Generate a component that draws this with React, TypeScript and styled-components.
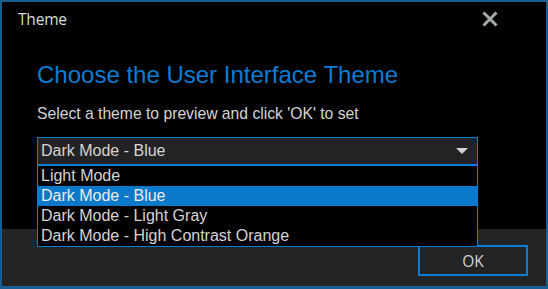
import React, { useState } from "react";
import styled, { createGlobalStyle } from "styled-components";

const GlobalStyle = createGlobalStyle`
  html, body {
    margin: 0;
    padding: 0;
    background: #000;
  }
  * {
    box-sizing: border-box;
  }
`;

const themes = [
  "Light Mode",
  "Dark Mode - Blue",
  "Dark Mode - Light Gray",
  "Dark Mode - High Contrast Orange",
];

const App = () => {
  const [selected] = useState(1);

  return (
    <>
      <GlobalStyle />
      <Window>
        <TitleBar>
          <Title>Theme</Title>
          <CloseButton aria-label="Close">
            <svg width="16" height="16" viewBox="0 0 16 16">
              <path d="M1.5 1.5 L14.5 14.5 M14.5 1.5 L1.5 14.5" stroke="#a3abab" strokeWidth="3" />
            </svg>
          </CloseButton>
        </TitleBar>
        <Body>
          <Heading>Choose the User Interface Theme</Heading>
          <Hint>Select a theme to preview and click 'OK' to set</Hint>
          <SelectWrap>
            <SelectBox>
              <span>{themes[selected]}</span>
              <Arrow />
            </SelectBox>
            <OptionList>
              {themes.map((t, i) => (
                <Option key={t} $active={i === selected}>
                  {t}
                </Option>
              ))}
            </OptionList>
          </SelectWrap>
        </Body>
        <Footer>
          <OkButton>OK</OkButton>
        </Footer>
      </Window>
    </>
  );
};

export default App;

const Window = styled.div`
  width: 548px;
  height: 289px;
  display: flex;
  flex-direction: column;
  background: #000;
  border: 2px solid #1a5d92;
  border-bottom-width: 3px;
  font-family: "Liberation Sans", Arial, sans-serif;
`;

const TitleBar = styled.div`
  height: 34px;
  display: flex;
  align-items: center;
  justify-content: space-between;
  padding: 0 48px 0 16px;
`;

const Title = styled.div`
  font-family: "Open Sans", "Noto Sans", sans-serif;
  font-size: 15.5px;
  color: #dcdcdc;
  letter-spacing: -0.2px;
`;

const CloseButton = styled.div`
  display: flex;
  align-items: center;
  margin-top: -1px;
`;

const Body = styled.div`
  flex: 0 0 193px;
  padding: 25px 0 0 35px;
`;

const Heading = styled.h1`
  margin: 0;
  font-weight: normal;
  font-size: 24px;
  line-height: 28px;
  color: #0b7dd3;
`;

const Hint = styled.p`
  margin: 16px 0 0;
  font-size: 15.7px;
  line-height: 18px;
  color: #d4d4d4;
`;

const SelectWrap = styled.div`
  position: relative;
  margin-top: 14px;
  width: 441px;
`;

const SelectBox = styled.div`
  height: 29px;
  display: flex;
  align-items: center;
  justify-content: space-between;
  padding: 0 8px 0 3px;
  background: #232325;
  border: 1px solid #0b7dd3;
  border-bottom-width: 2px;
  font-size: 16px;
  color: #d4d4d4;
`;

const Arrow = styled.span`
  width: 0;
  height: 0;
  border-left: 6px solid transparent;
  border-right: 6px solid transparent;
  border-top: 6px solid #d0d4d8;
  margin-right: 1px;
`;

const OptionList = styled.ul`
  position: absolute;
  left: 0;
  right: 0;
  top: 29px;
  margin: 0;
  padding: 0;
  list-style: none;
  background: #000;
  border: 1px solid #0b7dd3;
  border-top: none;
  z-index: 2;
`;

const Option = styled.li<{ $active: boolean }>`
  height: 20px;
  line-height: 20px;
  padding-left: 3px;
  font-size: 16px;
  color: ${(p) => (p.$active ? "#ececec" : "#d4d4d4")};
  background: ${(p) => (p.$active ? "#0a79c9" : "transparent")};
`;

const Footer = styled.div`
  flex: 1;
  display: flex;
  justify-content: flex-end;
  align-items: flex-start;
  padding: 16px 18px 0 0;
  background: #232426;
`;

const OkButton = styled.button`
  width: 110px;
  height: 31px;
  background: transparent;
  border: 2px solid #0b7dd3;
  color: #d4d4d4;
  font-family: "Open Sans", "Noto Sans", sans-serif;
  font-size: 15.5px;
  padding: 0;
`;
